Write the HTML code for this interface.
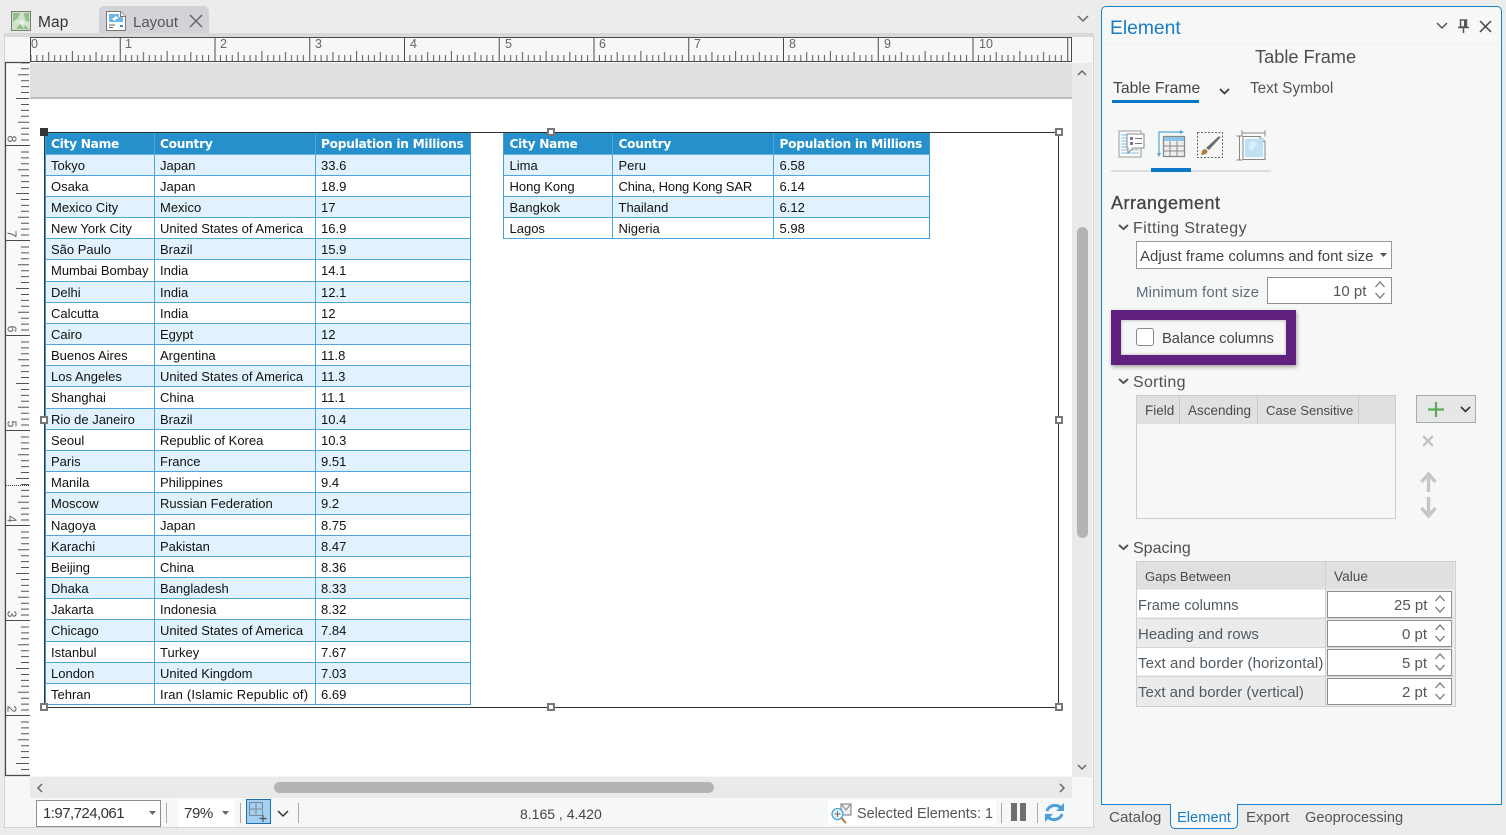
<!DOCTYPE html>
<html><head><meta charset="utf-8">
<style>
html,body{margin:0;padding:0}
body{width:1506px;height:835px;overflow:hidden;position:relative;background:#ececec;font-family:"Liberation Sans",sans-serif;color:#444}
.a{position:absolute;box-sizing:border-box}
.t{position:absolute;white-space:nowrap;line-height:20px;font-size:15px;color:#4a4a4a;margin-top:1px}
.tb{position:absolute;font-size:13px;color:#111;background:#fff;border-left:1px solid #3f9bd8;border-right:1px solid #3f9bd8;box-sizing:border-box}
.tb .r{display:grid;grid-template-rows:minmax(0,1fr);height:21.18px;box-sizing:border-box;border-bottom:1.5px solid #4fa5dc;line-height:22px;white-space:nowrap}
.tb .r:nth-child(even){background:#e0f2fe}
.tb .h{background:#2590cc!important;color:#fff;font:bold 12.2px/23px "DejaVu Sans",sans-serif;letter-spacing:-.28px;border-bottom:1.5px solid #6cb5e2;height:21.6px}
.tb .r span{display:block;padding-left:5.5px;border-right:1.5px solid #4fa5dc;overflow:hidden}
.tb .r span:last-child{border-right:0}
.c1{grid-template-columns:109px 161px 155px}
.c2{grid-template-columns:109px 161px 156px}
.hd{position:absolute;width:8px;height:8px;background:#fff;border:2px solid #777;box-sizing:border-box}
.sp{position:absolute;background:#fff;border:1px solid #8e8e8e;box-sizing:border-box}
svg{position:absolute;overflow:visible}
</style></head><body>

<!-- Doc tabs -->
<div class="a" style="left:99px;top:6px;width:110px;height:28px;background:#d1d3d8;border-radius:5px 5px 0 0"></div>
<svg style="left:11px;top:11px" width="21" height="21"><rect x=".5" y=".5" width="19" height="19" fill="#cfe3c8" stroke="#7a7a7a"/><path d="M2 2h7l-2 5-5 4zM13 2h5v9l-4-2zM5 18l4-5 4 5zM14 14l4 4h-5z" fill="#93bd8d"/><path d="M7 11l5-2 2 4-4 1z" fill="#e6f2f8"/></svg>
<div class="t" style="left:38px;top:12px;font-size:15.5px;color:#333;letter-spacing:.1px">Map</div>
<svg style="left:106px;top:11px" width="21" height="21"><path d="M.5.5h14l5 5v14H.5z" fill="#fff" stroke="#777"/><path d="M14.500.5v5h5" fill="#eee" stroke="#777"/><path d="M3 3h10v3h4v5H3z" fill="#6fb5e6"/><path d="M6 8l4-3 3 2-3 1-1 2z" fill="#fff"/><path d="M3 14h6M3 16.500h4" stroke="#666"/><path d="M14 15h3" stroke="#3d8fd0" stroke-width="2"/></svg>
<div class="t" style="left:133px;top:12px;font-size:15px;color:#555">Layout</div>
<svg style="left:189px;top:14px" width="14" height="14"><path d="M1 1l12 12M13 1L1 13" stroke="#666" stroke-width="1.500"/></svg>
<svg style="left:1077px;top:15px" width="12" height="8"><path d="M1 1l5 5 5-5" fill="none" stroke="#666" stroke-width="1.500"/></svg>

<!-- Map view frame -->
<div class="a" style="left:4px;top:33px;width:1090px;height:795px;background:#f6f8f8;border-top:4px solid #d9d9d9;border-right:1px solid #d4d4d4;border-bottom:1px solid #d4d4d4;border-left:1px solid #d4d4d4"></div>

<!-- Rulers -->
<svg style="left:0;top:0" width="1506" height="835">
<defs>
<pattern id="hr" x="25" y="37" width="94.75" height="25" patternUnits="userSpaceOnUse">
<path d="M5.920 18v7M11.840 18v7M17.770 18v7M23.690 15v10M29.610 18v7M35.530 18v7M41.450 18v7M47.380 14v11M53.300 18v7M59.220 18v7M65.140 18v7M71.060 15v10M76.980 18v7M82.910 18v7M88.830 18v7" stroke="#555" stroke-width="1"/>
<path d="M.5 0v25" stroke="#4a4a4a" stroke-width="1"/>
</pattern>
<pattern id="vr" x="5" y="51" width="25" height="95" patternUnits="userSpaceOnUse">
<path d="M16 5.940h8M16 11.880h8M16 17.810h8M13 23.750h11M16 29.690h8M16 35.630h8M16 41.560h8M11 47.500h13M16 53.440h8M16 59.380h8M16 65.310h8M13 71.250h11M16 77.190h8M16 83.130h8M16 89.060h8" stroke="#555" stroke-width="1"/>
<path d="M0 94.500h25" stroke="#4a4a4a" stroke-width="1"/>
</pattern>
</defs>
<rect x="31" y="37" width="1040" height="25" fill="#f6f8f8"/>
<rect x="31" y="37" width="1040" height="25" fill="url(#hr)"/>
<path d="M31 37.500h1040M30.500 37v25M1071.500 37v25M31 61.500h1040" stroke="#4a4a4a" fill="none"/>
<rect x="6" y="63" width="24" height="712" fill="#f8f9f9"/>
<rect x="6" y="63" width="24" height="712" fill="url(#vr)"/>
<path d="M5.500 62v714M5 775.500h25M5 62.500h25" stroke="#4a4a4a" fill="none" stroke-width="1.200"/>
<path d="M6 485.500h23" stroke="#333" stroke-dasharray="1 1"/>
</svg>
<div class="t" style="left:31px;top:33px;font-size:12.500px;color:#666">0</div>
<div class="t" style="left:125px;top:33px;font-size:12.500px;color:#666">1</div>
<div class="t" style="left:220px;top:33px;font-size:12.500px;color:#666">2</div>
<div class="t" style="left:315px;top:33px;font-size:12.500px;color:#666">3</div>
<div class="t" style="left:410px;top:33px;font-size:12.500px;color:#666">4</div>
<div class="t" style="left:505px;top:33px;font-size:12.500px;color:#666">5</div>
<div class="t" style="left:599px;top:33px;font-size:12.500px;color:#666">6</div>
<div class="t" style="left:694px;top:33px;font-size:12.500px;color:#666">7</div>
<div class="t" style="left:789px;top:33px;font-size:12.500px;color:#666">8</div>
<div class="t" style="left:884px;top:33px;font-size:12.500px;color:#666">9</div>
<div class="t" style="left:979px;top:33px;font-size:12.500px;color:#666">10</div>
<div class="t" style="left:8px;top:128px;font-size:12.500px;color:#666;transform:rotate(90deg)">8</div>
<div class="t" style="left:8px;top:223px;font-size:12.500px;color:#666;transform:rotate(90deg)">7</div>
<div class="t" style="left:8px;top:318px;font-size:12.500px;color:#666;transform:rotate(90deg)">6</div>
<div class="t" style="left:8px;top:413px;font-size:12.500px;color:#666;transform:rotate(90deg)">5</div>
<div class="t" style="left:8px;top:508px;font-size:12.500px;color:#666;transform:rotate(90deg)">4</div>
<div class="t" style="left:8px;top:603px;font-size:12.500px;color:#666;transform:rotate(90deg)">3</div>
<div class="t" style="left:8px;top:698px;font-size:12.500px;color:#666;transform:rotate(90deg)">2</div>

<!-- Canvas -->
<div class="a" style="left:30px;top:63px;width:1042px;height:36px;background:#e0e0de;border-bottom:2px solid #bcbcbc"></div>
<div class="a" style="left:30px;top:99px;width:1042px;height:677px;background:#fff"></div>

<!-- Table 1 -->
<div class="tb" style="left:44.500px;top:133px;width:426.500px">
<div class="r c1 h"><span>City Name</span><span>Country</span><span>Population in Millions</span></div>
<div class="r c1"><span>Tokyo</span><span>Japan</span><span>33.6</span></div>
<div class="r c1"><span>Osaka</span><span>Japan</span><span>18.9</span></div>
<div class="r c1"><span>Mexico City</span><span>Mexico</span><span>17</span></div>
<div class="r c1"><span>New York City</span><span>United States of America</span><span>16.9</span></div>
<div class="r c1"><span>São Paulo</span><span>Brazil</span><span>15.9</span></div>
<div class="r c1"><span>Mumbai Bombay</span><span>India</span><span>14.1</span></div>
<div class="r c1"><span>Delhi</span><span>India</span><span>12.1</span></div>
<div class="r c1"><span>Calcutta</span><span>India</span><span>12</span></div>
<div class="r c1"><span>Cairo</span><span>Egypt</span><span>12</span></div>
<div class="r c1"><span>Buenos Aires</span><span>Argentina</span><span>11.8</span></div>
<div class="r c1"><span>Los Angeles</span><span>United States of America</span><span>11.3</span></div>
<div class="r c1"><span>Shanghai</span><span>China</span><span>11.1</span></div>
<div class="r c1"><span>Rio de Janeiro</span><span>Brazil</span><span>10.4</span></div>
<div class="r c1"><span>Seoul</span><span>Republic of Korea</span><span>10.3</span></div>
<div class="r c1"><span>Paris</span><span>France</span><span>9.51</span></div>
<div class="r c1"><span>Manila</span><span>Philippines</span><span>9.4</span></div>
<div class="r c1"><span>Moscow</span><span>Russian Federation</span><span>9.2</span></div>
<div class="r c1"><span>Nagoya</span><span>Japan</span><span>8.75</span></div>
<div class="r c1"><span>Karachi</span><span>Pakistan</span><span>8.47</span></div>
<div class="r c1"><span>Beijing</span><span>China</span><span>8.36</span></div>
<div class="r c1"><span>Dhaka</span><span>Bangladesh</span><span>8.33</span></div>
<div class="r c1"><span>Jakarta</span><span>Indonesia</span><span>8.32</span></div>
<div class="r c1"><span>Chicago</span><span>United States of America</span><span>7.84</span></div>
<div class="r c1"><span>Istanbul</span><span>Turkey</span><span>7.67</span></div>
<div class="r c1"><span>London</span><span>United Kingdom</span><span>7.03</span></div>
<div class="r c1"><span>Tehran</span><span style="letter-spacing:.17px">Iran (Islamic Republic of)</span><span>6.69</span></div>
</div>

<!-- Table 2 -->
<div class="tb" style="left:503px;top:133px;width:427px">
<div class="r c2 h"><span>City Name</span><span>Country</span><span>Population in Millions</span></div>
<div class="r c2"><span>Lima</span><span>Peru</span><span>6.58</span></div>
<div class="r c2"><span>Hong Kong</span><span style="letter-spacing:-.15px">China, Hong Kong SAR</span><span>6.14</span></div>
<div class="r c2"><span>Bangkok</span><span>Thailand</span><span>6.12</span></div>
<div class="r c2"><span>Lagos</span><span>Nigeria</span><span>5.98</span></div>
</div>

<!-- Selection -->
<div class="a" style="left:44px;top:132px;width:1015px;height:576px;border:1px solid #333"></div>
<div class="a" style="left:40px;top:128px;width:8px;height:8px;background:#333"></div>
<div class="hd" style="left:547px;top:128px"></div>
<div class="hd" style="left:1055px;top:128px"></div>
<div class="hd" style="left:40px;top:416px"></div>
<div class="hd" style="left:1055px;top:416px"></div>
<div class="hd" style="left:40px;top:703px"></div>
<div class="hd" style="left:547px;top:703px"></div>
<div class="hd" style="left:1055px;top:703px"></div>

<!-- Scrollbars -->
<div class="a" style="left:1072px;top:63px;width:20px;height:714px;background:#eaeaea"></div>
<div class="a" style="left:1077px;top:227px;width:11px;height:311px;background:#b4b4b4;border-radius:6px"></div>
<svg style="left:1076px;top:69px" width="12" height="8"><path d="M2 6l4-4 4 4" fill="none" stroke="#666" stroke-width="1.500"/></svg>
<svg style="left:1076px;top:763px" width="12" height="8"><path d="M2 2l4 4 4-4" fill="none" stroke="#666" stroke-width="1.500"/></svg>
<div class="a" style="left:30px;top:777px;width:1042px;height:21px;background:#eaeaea"></div>
<div class="a" style="left:274px;top:782px;width:440px;height:11px;background:#b4b4b4;border-radius:6px"></div>
<svg style="left:36px;top:782px" width="8" height="12"><path d="M6 2L2 6l4 4" fill="none" stroke="#666" stroke-width="1.500"/></svg>
<svg style="left:1058px;top:782px" width="8" height="12"><path d="M2 2l4 4-4 4" fill="none" stroke="#666" stroke-width="1.500"/></svg>

<!-- Status bar -->
<div class="a" style="left:36px;top:800px;width:125px;height:27px;background:#fff;border:1px solid #8e8e8e"></div>
<div class="t" style="left:43px;top:803px;font-size:15px;letter-spacing:-.55px;color:#333">1:97,724,061</div>
<svg style="left:149px;top:811px" width="8" height="5"><path d="M0 0h7l-3.500 4z" fill="#666"/></svg>
<div class="a" style="left:166px;top:803px;width:1px;height:20px;background:#aaa"></div>
<div class="a" style="left:178px;top:799px;width:57px;height:28px;background:#fff"></div>
<div class="t" style="left:184px;top:803px;font-size:15px;letter-spacing:-.4px;color:#333">79%</div>
<svg style="left:222px;top:811px" width="8" height="5"><path d="M0 0h7l-3.500 4z" fill="#666"/></svg>
<div class="a" style="left:240px;top:803px;width:1px;height:20px;background:#aaa"></div>
<div class="a" style="left:246px;top:799px;width:25px;height:25px;background:#a3cff0;border:1px solid #1a6fae"></div>
<svg style="left:249px;top:802px" width="20" height="20"><path d="M.5.5h13v13H.5zM7 .5v13M.5 7h13" fill="none" stroke="#7b8b98"/><path d="M14 13v7M10.500 16.500h7" stroke="#555" stroke-width="1.200"/></svg>
<svg style="left:277px;top:810px" width="12" height="8"><path d="M1 1l5 5 5-5" fill="none" stroke="#333" stroke-width="1.500"/></svg>
<div class="a" style="left:298px;top:803px;width:1px;height:20px;background:#aaa"></div>
<div class="t" style="left:520px;top:803px;font-size:14px;color:#444">8.165 , 4.420</div>
<div class="a" style="left:828px;top:800px;width:168px;height:25px;background:#fff"></div>
<svg style="left:830px;top:803px" width="23" height="22"><path d="M11 1h10v11h-10z" fill="#e8f2f8" stroke="#777"/><path d="M12 2l4 5 4-5" fill="none" stroke="#777"/><circle cx="7.500" cy="11" r="5.500" fill="#e6f4fc" stroke="#4fa5dc" stroke-width="1.300"/><path d="M7.500 8v6M4.500 11h6" stroke="#666"/><path d="M11.500 15l4.500 5" stroke="#b07a3c" stroke-width="2"/></svg>
<div class="t" style="left:857px;top:803px;font-size:14.400px;color:#555">Selected Elements: 1</div>
<div class="a" style="left:1001px;top:803px;width:1px;height:20px;background:#aaa"></div>
<div class="a" style="left:1011px;top:803px;width:6px;height:18px;background:#6e6e6e"></div>
<div class="a" style="left:1020px;top:803px;width:6px;height:18px;background:#6e6e6e"></div>
<div class="a" style="left:1037px;top:803px;width:1px;height:20px;background:#aaa"></div>
<svg style="left:1044px;top:802px" width="22" height="21"><path d="M3 9a8 7 0 0 1 14-3" fill="none" stroke="#4a9fdc" stroke-width="3"/><path d="M20 1v8h-8z" fill="#4a9fdc"/><path d="M18 12a8 7 0 0 1-14 3" fill="none" stroke="#4a9fdc" stroke-width="3"/><path d="M1 20v-8h8z" fill="#4a9fdc"/></svg>

<!-- Right panel -->
<div class="a" style="left:1101px;top:6px;width:401px;height:799px;background:#f6f8f8;border:1.500px solid #1a80c8;border-radius:5px 5px 0 0"></div>
<div class="a" style="left:1103px;top:44px;width:397px;height:1px;background:#eef0f0"></div>
<div class="t" style="left:1110px;top:18px;font-size:19.300px;color:#1a7cc4">Element</div>
<svg style="left:1436px;top:22px" width="12" height="8"><path d="M1 1l5 5 5-5" fill="none" stroke="#555" stroke-width="1.500"/></svg>
<svg style="left:1458px;top:19px" width="11" height="14"><path d="M2.500 1h6v7h-6zM0 8.500h11M5.500 9v5" fill="none" stroke="#555" stroke-width="1.500"/><path d="M6 1h2.500v7H6z" fill="#555"/></svg>
<svg style="left:1479px;top:20px" width="13" height="13"><path d="M1 1l11 11M12 1L1 12" stroke="#444" stroke-width="1.500"/></svg>
<div class="t" style="left:1255px;top:46px;font-size:18.200px;color:#4d4d4d">Table Frame</div>
<div class="t" style="left:1113px;top:78px;font-size:15.700px;color:#444">Table Frame</div>
<div class="a" style="left:1112px;top:100px;width:87px;height:2.500px;background:#0a78c4"></div>
<svg style="left:1219px;top:88px" width="11" height="7"><path d="M1 1l4.500 4.500L10 1" fill="none" stroke="#333" stroke-width="1.600"/></svg>
<div class="t" style="left:1250px;top:78px;font-size:15.300px;color:#555">Text Symbol</div>

<!-- Property icons -->
<svg style="left:1118px;top:130px" width="28" height="30">
<path d="M1 1h22v26H1z" fill="#fbfbfb" stroke="#999"/><path d="M3 5h7M3 8h7M3 11h7M3 14h7M3 17h7M3 20h18M3 23h18" stroke="#a9d4f0" stroke-width="1.500"/>
<path d="M9 4h17v14H15l-5 5v-5H9z" fill="#fff" stroke="#888"/><path d="M12 7h3v3h-3zM12 12h3v3h-3z" fill="#7d6fb0"/><path d="M17 8.500h7M17 13.500h7" stroke="#777"/>
</svg>
<svg style="left:1157px;top:130px" width="30" height="30">
<path d="M2 23V2h22" fill="none" stroke="#4fa5dc" stroke-width="1.200"/><path d="M23 0l4 2-4 2zM0 23l2 4 2-4z" fill="#4fa5dc"/>
<rect x="6.500" y="6.500" width="21" height="20" fill="#eee" stroke="#888" stroke-width="1.300"/><rect x="7" y="7" width="20" height="4" fill="#8ec4e8"/>
<path d="M7 16h20M7 21h20M13 11v15M20 11v15" stroke="#888"/>
</svg>
<svg style="left:1197px;top:132px" width="27" height="27">
<rect x=".5" y=".5" width="25" height="25" fill="none" stroke="#666" stroke-dasharray="2 1.500"/>
<path d="M9 16L22 4l1.500 1.500L12 18z" fill="#6e6e6e"/><path d="M4 23c1-1 0-4 2.500-5.500 2-1 4 .5 4 2 0 2-3 3.500-6.500 3.500z" fill="#b57b3e"/>
</svg>
<svg style="left:1236px;top:130px" width="31" height="31">
<path d="M6 .500v6M29 .500v6M6 3h23M.5 6h6M.5 30h6M3.500 6v24" stroke="#888" fill="none"/>
<path d="M7 6.500h17l5 5V29.500H7z" fill="#f5f9fc" stroke="#888"/><path d="M24 6.500v5h5" fill="#fff" stroke="#888"/>
<rect x="9" y="9" width="18" height="18" fill="#bfdff5"/><path d="M13 13l5-2 4 3-3 3-2 4-4-2z" fill="#dbeefb"/>
</svg>
<div class="a" style="left:1111px;top:170px;width:160px;height:2px;background:#dcdcdc"></div>
<div class="a" style="left:1151px;top:168px;width:40px;height:4px;background:#0a78c4"></div>

<div class="t" style="left:1111px;top:192px;font-size:18px;letter-spacing:.5px;color:#444;-webkit-text-stroke:.3px #444">Arrangement</div>
<svg style="left:1118px;top:224px" width="11" height="7"><path d="M1 1l4.500 4L10 1" fill="none" stroke="#555" stroke-width="2"/></svg>
<div class="t" style="left:1133px;top:218px;font-size:16px;letter-spacing:.4px;color:#505050">Fitting Strategy</div>
<div class="a" style="left:1136px;top:241px;width:256px;height:28px;background:#fff;border:1px solid #999"></div>
<div class="t" style="left:1140px;top:246px;font-size:15px;color:#444">Adjust frame columns and font size</div>
<svg style="left:1380px;top:253px" width="7" height="5"><path d="M0 0h7L3.500 4z" fill="#555"/></svg>
<div class="t" style="left:1136px;top:282px;font-size:15px;letter-spacing:.13px;color:#5e6d79">Minimum font size</div>
<div class="sp" style="left:1267px;top:277px;width:125px;height:27px"></div>
<div class="t" style="left:1333px;top:281px;font-size:15px;color:#555">10 pt</div>
<svg style="left:1374px;top:280px" width="12" height="20"><path d="M1.500 7l4.500-5 4.500 5M1.500 13l4.500 5 4.500-5" fill="none" stroke="#777" stroke-width="1.300"/></svg>

<!-- Purple highlight -->
<div class="a" style="left:1111px;top:310px;width:185px;height:55px;border:10px solid #602080;box-shadow:1px 2px 4px rgba(0,0,0,.35),inset 0 0 3px rgba(0,0,0,.3)"></div>
<div class="a" style="left:1136px;top:328px;width:18px;height:18px;background:#fff;border:1px solid #888;border-radius:3px"></div>
<div class="t" style="left:1162px;top:328px;font-size:14.700px;color:#444">Balance columns</div>

<svg style="left:1118px;top:378px" width="11" height="7"><path d="M1 1l4.500 4L10 1" fill="none" stroke="#555" stroke-width="2"/></svg>
<div class="t" style="left:1133px;top:372px;font-size:16px;letter-spacing:.3px;color:#505050">Sorting</div>
<div class="a" style="left:1136px;top:395px;width:260px;height:124px;border:1px solid #ccc;background:#f6f8f8"></div>
<div class="a" style="left:1137px;top:396px;width:258px;height:28px;background:#e0e0e0"></div>
<div class="a" style="left:1179px;top:396px;width:1px;height:28px;background:#c8c8c8"></div>
<div class="a" style="left:1257px;top:396px;width:1px;height:28px;background:#c8c8c8"></div>
<div class="a" style="left:1358px;top:396px;width:1px;height:28px;background:#c8c8c8"></div>
<div class="t" style="left:1145px;top:400px;font-size:13.500px;color:#4a4a4a">Field</div>
<div class="t" style="left:1188px;top:400px;font-size:13.500px;color:#4a4a4a">Ascending</div>
<div class="t" style="left:1266px;top:400px;font-size:13.100px;color:#4a4a4a">Case Sensitive</div>
<div class="a" style="left:1416px;top:395px;width:60px;height:28px;background:#e6e7e7;border:1px solid #aaa"></div>
<svg style="left:1428px;top:402px" width="16" height="15"><path d="M8 0v15M0 7.500h16" stroke="#5cab5c" stroke-width="2.200"/></svg>
<svg style="left:1460px;top:406px" width="11" height="7"><path d="M1 1l4.500 4.500L10 1" fill="none" stroke="#333" stroke-width="1.600"/></svg>
<svg style="left:1422px;top:435px" width="12" height="12"><path d="M1 1l10 10M11 1L1 11" stroke="#c4c4c4" stroke-width="2.400"/></svg>
<svg style="left:1420px;top:472px" width="17" height="46"><path d="M8.500 20V2M1.500 10l7-8 7 8M8.500 25v19M1.500 36l7 8 7-8" fill="none" stroke="#c6c6c6" stroke-width="3.400"/></svg>

<svg style="left:1118px;top:544px" width="11" height="7"><path d="M1 1l4.500 4L10 1" fill="none" stroke="#555" stroke-width="2"/></svg>
<div class="t" style="left:1133px;top:538px;font-size:16px;color:#505050">Spacing</div>
<div class="a" style="left:1136px;top:561px;width:320px;height:146px;background:#ebebeb;border:1px solid #cfcfcf"></div>
<div class="a" style="left:1137px;top:562px;width:317px;height:27px;background:#e0e0e0"></div>
<div class="a" style="left:1137px;top:590px;width:188px;height:27px;background:#fff"></div>
<div class="a" style="left:1137px;top:648px;width:188px;height:27px;background:#fff"></div>
<div class="a" style="left:1325px;top:562px;width:1px;height:144px;background:#cfcfcf"></div>
<div class="a" style="left:1137px;top:618px;width:317px;height:1px;background:#d4d4d4"></div>
<div class="a" style="left:1137px;top:647px;width:317px;height:1px;background:#d4d4d4"></div>
<div class="a" style="left:1137px;top:676px;width:317px;height:1px;background:#d4d4d4"></div>
<div class="t" style="left:1145px;top:566px;font-size:13.100px;color:#4a4a4a">Gaps Between</div>
<div class="t" style="left:1334px;top:566px;font-size:13.700px;color:#4a4a4a">Value</div>
<div class="t" style="left:1138px;top:595px;font-size:14.600px;color:#505a62">Frame columns</div>
<div class="t" style="left:1138px;top:624px;font-size:15px;color:#505a62">Heading and rows</div>
<div class="t" style="left:1138px;top:653px;font-size:15px;letter-spacing:.07px;color:#505a62">Text and border (horizontal)</div>
<div class="t" style="left:1138px;top:682px;font-size:15px;color:#505a62">Text and border (vertical)</div>
<div class="sp" style="left:1327px;top:591px;width:125px;height:27px"></div>
<div class="sp" style="left:1327px;top:620px;width:125px;height:27px"></div>
<div class="sp" style="left:1327px;top:649px;width:125px;height:27px"></div>
<div class="sp" style="left:1327px;top:678px;width:125px;height:27px"></div>
<div class="t" style="left:1394px;top:595px;font-size:15px;color:#555">25 pt</div>
<div class="t" style="left:1402px;top:624px;font-size:15px;color:#555">0 pt</div>
<div class="t" style="left:1402px;top:653px;font-size:15px;color:#555">5 pt</div>
<div class="t" style="left:1402px;top:682px;font-size:15px;color:#555">2 pt</div>
<svg style="left:1434px;top:594px" width="12" height="20"><path d="M1.500 7l4.500-5 4.500 5M1.500 13l4.500 5 4.500-5" fill="none" stroke="#777" stroke-width="1.300"/></svg>
<svg style="left:1434px;top:623px" width="12" height="20"><path d="M1.500 7l4.500-5 4.500 5M1.500 13l4.500 5 4.500-5" fill="none" stroke="#777" stroke-width="1.300"/></svg>
<svg style="left:1434px;top:652px" width="12" height="20"><path d="M1.500 7l4.500-5 4.500 5M1.500 13l4.500 5 4.500-5" fill="none" stroke="#777" stroke-width="1.300"/></svg>
<svg style="left:1434px;top:681px" width="12" height="20"><path d="M1.500 7l4.500-5 4.500 5M1.500 13l4.500 5 4.500-5" fill="none" stroke="#777" stroke-width="1.300"/></svg>

<!-- Bottom tabs -->
<div class="a" style="left:1170px;top:804px;width:68px;height:25px;background:#f6f8f8;border:1.500px solid #1a80c8;border-top:0;border-radius:0 0 5px 5px"></div>
<div class="t" style="left:1109px;top:807px;font-size:15.200px;color:#555">Catalog</div>
<div class="t" style="left:1177px;top:807px;font-size:14.700px;color:#1a7cc4">Element</div>
<div class="t" style="left:1246px;top:807px;font-size:15px;color:#555">Export</div>
<div class="t" style="left:1305px;top:807px;font-size:14.600px;color:#555">Geoprocessing</div>
</body></html>
